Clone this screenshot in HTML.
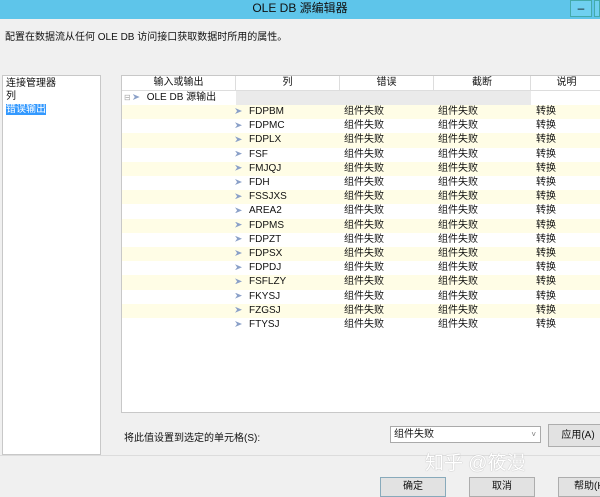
<!DOCTYPE html>
<html><head><meta charset="utf-8"><style>
*{margin:0;padding:0;box-sizing:border-box}
body{width:600px;height:489px;overflow:hidden;background:#f0f0f0;font-family:"Liberation Sans","Noto Sans CJK SC",sans-serif;font-size:10px;color:#111;position:relative}
.a{position:absolute}
.title{left:0;top:0;width:600px;height:19px;background:#5ec5ea;text-align:center;line-height:17px;font-size:12px;color:#111}
.min{left:570px;top:0;width:22px;height:17px;border:1px solid #4aa;background:#6fd0f0;text-align:center;line-height:14px;font-size:12px}
.cb{left:594px;top:0;width:6px;height:17px;border:1px solid #4aa;background:#6fd0f0}
.left{left:2px;top:75px;width:99px;height:380px;background:#fff;border:1px solid #c8c8c8}
.grid{left:121px;top:75px;width:481px;height:338px;background:#fff;border:1px solid #c8c8c8}
.hd{top:0;height:15px;line-height:14px;text-align:center;border-right:1px solid #ddd;border-bottom:1px solid #ddd;background:#fff}
.row{left:0;width:480px;height:14.2px;line-height:14px}
.y{background:#fffde6}
.c{position:absolute;top:0}
.ic{display:inline-block;width:7px;height:6px;background:#8aa0c8;margin-right:7px;vertical-align:0px;clip-path:polygon(0 0,100% 50%,0 100%,30% 50%)}
.btn{background:#e2e2e2;border:1px solid #adadad;text-align:center}
</style></head><body>
<div class="a title">OLE DB 源编辑器</div>
<div class="a min">–</div><div class="a cb"></div>
<div class="a" style="left:5px;top:28px">配置在数据流从任何 OLE DB 访问接口获取数据时所用的属性。</div>
<div class="a left">
<div style="padding:1px 3px;line-height:13px">连接管理器<br>列<br><span style="background:#3399ff;color:#fff">错误输出</span></div>
</div>
<div class="a grid">
<div class="a hd" style="left:0;width:114px">输入或输出</div>
<div class="a hd" style="left:114px;width:104px">列</div>
<div class="a hd" style="left:218px;width:94px">错误</div>
<div class="a hd" style="left:312px;width:97px">截断</div>
<div class="a hd" style="left:409px;width:72px">说明</div>
<div class="a" style="left:114px;top:15px;width:295px;height:14px;background:#eaeaea"></div>
<div class="a" style="left:0;top:15px;line-height:14px;padding-left:2px"><span style="color:#aaa;font-size:8px">⊟</span><span class="ic" style="margin-left:2px"></span>OLE DB 源输出</div>
<div id="rows"></div>
</div>
<div class="a" style="left:124px;top:429px">将此值设置到选定的单元格(S):</div>
<div class="a" style="left:390px;top:426px;width:151px;height:17px;background:#fff;border:1px solid #aaa;line-height:15px;padding-left:3px">组件失败<span style="position:absolute;right:4px;color:#777;font-size:8px">˅</span></div>
<div class="a btn" style="left:548px;top:424px;width:60px;height:23px;line-height:21px">应用(A)</div>
<div class="a" style="left:0;top:455px;width:600px;height:1px;background:#dcdcdc"></div>
<div class="a" style="left:425px;top:448px;font-size:19px;color:#fff;text-shadow:0 0 1px #999">知乎 @筱漫</div>
<div class="a btn" style="left:380px;top:477px;width:66px;height:20px;line-height:18px;border-color:#8ab">确定</div>
<div class="a btn" style="left:469px;top:477px;width:66px;height:20px;line-height:18px">取消</div>
<div class="a btn" style="left:558px;top:477px;width:66px;height:20px;line-height:18px">帮助(H)</div>
<script>
var n=["FDPBM","FDPMC","FDPLX","FSF","FMJQJ","FDH","FSSJXS","AREA2","FDPMS","FDPZT","FDPSX","FDPDJ","FSFLZY","FKYSJ","FZGSJ","FTYSJ"],h="";
n.forEach(function(s,i){h+='<div class="a row'+(i%2?'':' y')+'" style="top:'+(29+i*14.2)+'px"><span class="c" style="left:113px"><span class="ic"></span>'+s+'</span><span class="c" style="left:222px">组件失败</span><span class="c" style="left:316px">组件失败</span><span class="c" style="left:414px">转换</span></div>'});
document.getElementById("rows").innerHTML=h;
</script>
</body></html>
